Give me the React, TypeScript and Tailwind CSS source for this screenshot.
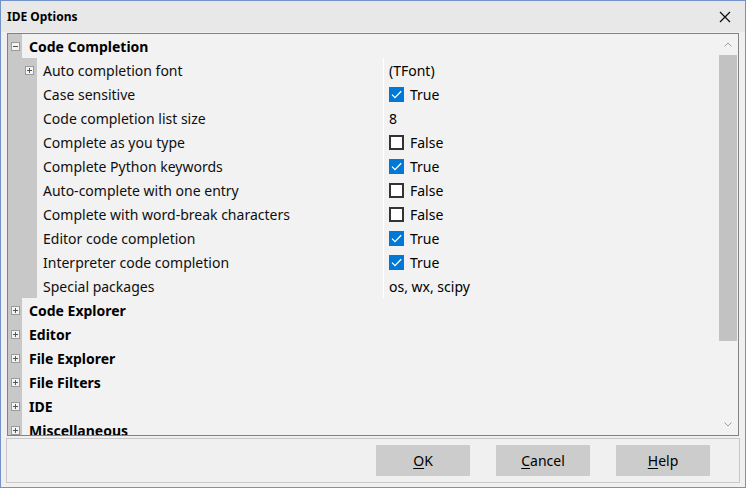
import React from 'react';

type Prop = {
  name: string;
  value: string;
  check?: boolean;
  expandable?: boolean;
};

const props: Prop[] = [
  { name: 'Auto completion font', value: '(TFont)', expandable: true },
  { name: 'Case sensitive', value: 'True', check: true },
  { name: 'Code completion list size', value: '8' },
  { name: 'Complete as you type', value: 'False', check: false },
  { name: 'Complete Python keywords', value: 'True', check: true },
  { name: 'Auto-complete with one entry', value: 'False', check: false },
  { name: 'Complete with word-break characters', value: 'False', check: false },
  { name: 'Editor code completion', value: 'True', check: true },
  { name: 'Interpreter code completion', value: 'True', check: true },
  { name: 'Special packages', value: 'os, wx, scipy' },
];

const categories = ['Code Explorer', 'Editor', 'File Explorer', 'File Filters', 'IDE', 'Miscellaneous'];

function ExpandBox({ open }: { open?: boolean }) {
  return (
    <svg width="9" height="9" viewBox="0 0 9 9" className="shrink-0">
      <rect x="0.5" y="0.5" width="8" height="8" fill="#f4f4f4" stroke="#9a9a9a" />
      <line x1="2" y1="4.5" x2="7" y2="4.5" stroke="#555" />
      {!open && <line x1="4.5" y1="2" x2="4.5" y2="7" stroke="#555" />}
    </svg>
  );
}

function CheckBox({ checked }: { checked: boolean }) {
  if (checked) {
    return (
      <svg width="15" height="15" viewBox="0 0 15 15" className="shrink-0">
        <rect x="0" y="0" width="15" height="15" fill="#0078d7" />
        <path d="M3 7.6 L6 10.6 L12.2 4.2" fill="none" stroke="#fff" strokeWidth="1.3" />
      </svg>
    );
  }
  return <span className="h-[15px] w-[15px] shrink-0 border-2 border-[#333] bg-white" />;
}

export default function App() {
  return (
    <div
      className="flex h-[488px] w-[746px] flex-col border border-[#7392c8] bg-[#f0f0f0] text-black"
      style={{ fontFamily: '"Noto Sans", "Open Sans", sans-serif' }}
    >
      {/* Title bar */}
      <div className="flex h-[31px] shrink-0 items-center justify-between bg-[#e8e8e8] pl-[6px] pr-[14px]">
        <span className="text-[12px] font-bold">IDE Options</span>
        <svg width="12" height="12" viewBox="0 0 12 12">
          <path d="M1 1 L11 11 M11 1 L1 11" stroke="#111" strokeWidth="1.3" />
        </svg>
      </div>

      {/* Inspector */}
      <div className="ml-[6px] mr-[6px] mt-[1px] flex h-[403px] shrink-0 overflow-hidden border border-[#828282] bg-[#f2f2f2] text-[14px]">
        <div className="flex-1 overflow-hidden">
          <div className="flex h-[24px] items-center">
            <div className="flex h-full w-[14px] items-center justify-center bg-[#c8c8c8]">
              <ExpandBox open />
            </div>
            <span className="pl-[7px] font-bold">Code Completion</span>
          </div>
          {props.map((p) => (
            <div key={p.name} className="flex h-[24px] items-center">
              <div className="flex h-full w-[29px] items-center justify-end bg-[#c8c8c8] pr-[3px]">
                {p.expandable && <ExpandBox />}
              </div>
              <span className="w-[346px] pl-[6px] text-[#0f0f0f]">{p.name}</span>
              <div className="flex h-full items-center gap-[6px] border-l border-white pl-[5px]">
                {p.check !== undefined && <CheckBox checked={p.check} />}
                <span>{p.value}</span>
              </div>
            </div>
          ))}
          {categories.map((c) => (
            <div key={c} className="flex h-[24px] shrink-0 items-center">
              <div className="flex h-full w-[14px] items-center justify-center bg-[#c8c8c8]">
                <ExpandBox />
              </div>
              <span className="pl-[7px] font-bold">{c}</span>
            </div>
          ))}
        </div>

        {/* Scrollbar */}
        <div className="flex w-[20px] shrink-0 flex-col">
          <div className="flex h-[21px] items-center justify-center">
            <svg width="8" height="5" viewBox="0 0 8 5">
              <path d="M0.5 4.5 L4 1 L7.5 4.5" fill="none" stroke="#a0a0a0" />
            </svg>
          </div>
          <div className="mx-[1px] h-[286px] bg-[#c2c2c2]" />
          <div className="flex-1" />
          <div className="flex h-[21px] items-center justify-center">
            <svg width="8" height="5" viewBox="0 0 8 5">
              <path d="M0.5 0.5 L4 4 L7.5 0.5" fill="none" stroke="#a0a0a0" />
            </svg>
          </div>
        </div>
      </div>

      {/* Button panel */}
      <div className="mx-[5px] mt-[2px] flex h-[45px] shrink-0 items-center justify-end gap-[26px] border border-[#c8c8c8] pb-[1px] pr-[29px] text-[14px]">
        {['OK', 'Cancel', 'Help'].map((b) => (
          <div key={b} className="flex h-[31px] w-[94px] items-center justify-center bg-[#cccccc]">
            <span>
              <span className="underline underline-offset-2">{b[0]}</span>
              {b.slice(1)}
            </span>
          </div>
        ))}
      </div>
    </div>
  );
}
